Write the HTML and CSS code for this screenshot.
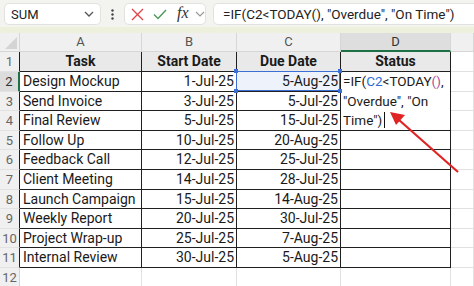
FILE: index.html
```html
<!DOCTYPE html>
<html lang="en">
<head>
  <meta charset="UTF-8">
  <title>Status Formula</title>
  <link rel="stylesheet" href="styles.css">
</head>
<body>

  <div class="toolbar">
    <div class="namebox">
      <span>SUM</span>
      <svg width="10" height="6" viewBox="0 0 10 6"><path d="M1 1 L5 5 L9 1" fill="none" stroke="#555" stroke-width="1.3"/></svg>
    </div>
    <div class="dots">
      <svg width="3" height="11" viewBox="0 0 3 11"><circle cx="1.5" cy="1.5" r="1.2" fill="#444"/><circle cx="1.5" cy="5.5" r="1.2" fill="#444"/><circle cx="1.5" cy="9.5" r="1.2" fill="#444"/></svg>
    </div>
    <div class="actions">
      <svg class="ic-x" width="13" height="13" viewBox="0 0 13 13"><path d="M1 1 L12 12 M12 1 L1 12" stroke="#e0474c" stroke-width="1.4" fill="none"/></svg>
      <svg class="ic-ok" width="14" height="11" viewBox="0 0 14 11"><path d="M1 5.5 L5 9.5 L13 1" stroke="#4a9a5a" stroke-width="1.4" fill="none"/></svg>
      <span class="fx">fx</span>
      <svg class="ic-dd" width="10" height="6" viewBox="0 0 10 6"><path d="M1 1 L5 5 L9 1" fill="none" stroke="#999" stroke-width="1.2"/></svg>
    </div>
    <div class="formula">=IF(C2&lt;TODAY(), "Overdue", "On Time")</div>
  </div>
  <div class="strip"></div>

  <div class="sheet">
    <!-- column headers -->
    <div class="corner"><svg width="12" height="12" viewBox="0 0 12 12"><path d="M12 0 L12 12 L0 12 Z" fill="#d4d4d4"/></svg></div>
    <div class="colhead">A</div>
    <div class="colhead">B</div>
    <div class="colhead">C</div>
    <div class="colhead active">D</div>
    <div class="colhead"></div>

    <div class="rowhead in">1</div>
    <div class="cell t head">Task</div>
    <div class="cell t head">Start Date</div>
    <div class="cell t head">Due Date</div>
    <div class="cell t head">Status</div>
    <div class="cell"></div>

    <div class="rowhead in active">2</div>
    <div class="cell t">Design Mockup</div>
    <div class="cell t num">1-Jul-25</div>
    <div class="cell t num ref">5-Aug-25
      <i class="h h1"></i><i class="h h2"></i><i class="h h3"></i><i class="h h4"></i>
    </div>
    <div class="cell t editor">
      <div>=IF(<span class="c-ref">C2</span>&lt;TODAY<span class="c-par">()</span>,</div>
      <div>"Overdue", "On</div>
      <div>Time")<span class="caret"></span></div>
    </div>
    <div class="cell"></div>

    <div class="rowhead in">3</div>
    <div class="cell t">Send Invoice</div>
    <div class="cell t num">3-Jul-25</div>
    <div class="cell t num">5-Jul-25</div>
    <div class="cell"></div>

    <div class="rowhead in">4</div>
    <div class="cell t">Final Review</div>
    <div class="cell t num">5-Jul-25</div>
    <div class="cell t num">15-Jul-25</div>
    <div class="cell"></div>

    <div class="rowhead in">5</div>
    <div class="cell t">Follow Up</div>
    <div class="cell t num">10-Jul-25</div>
    <div class="cell t num">20-Aug-25</div>
    <div class="cell t"></div>
    <div class="cell"></div>

    <div class="rowhead in">6</div>
    <div class="cell t">Feedback Call</div>
    <div class="cell t num">12-Jul-25</div>
    <div class="cell t num">25-Jul-25</div>
    <div class="cell t"></div>
    <div class="cell"></div>

    <div class="rowhead in">7</div>
    <div class="cell t">Client Meeting</div>
    <div class="cell t num">14-Jul-25</div>
    <div class="cell t num">28-Jul-25</div>
    <div class="cell t"></div>
    <div class="cell"></div>

    <div class="rowhead in">8</div>
    <div class="cell t">Launch Campaign</div>
    <div class="cell t num">15-Jul-25</div>
    <div class="cell t num">14-Aug-25</div>
    <div class="cell t"></div>
    <div class="cell"></div>

    <div class="rowhead in">9</div>
    <div class="cell t">Weekly Report</div>
    <div class="cell t num">20-Jul-25</div>
    <div class="cell t num">30-Jul-25</div>
    <div class="cell t"></div>
    <div class="cell"></div>

    <div class="rowhead in">10</div>
    <div class="cell t">Project Wrap-up</div>
    <div class="cell t num">25-Jul-25</div>
    <div class="cell t num">7-Aug-25</div>
    <div class="cell t"></div>
    <div class="cell"></div>

    <div class="rowhead in">11</div>
    <div class="cell t">Internal Review</div>
    <div class="cell t num">30-Jul-25</div>
    <div class="cell t num">5-Aug-25</div>
    <div class="cell t"></div>
    <div class="cell"></div>

    <div class="rowhead">12</div>
    <div class="cell"></div>
    <div class="cell"></div>
    <div class="cell"></div>
    <div class="cell"></div>
    <div class="cell"></div>
  </div>

  <!-- callout arrow pointing at the formula -->
  <svg class="arrow" width="474" height="286" viewBox="0 0 474 286">
    <line x1="458" y1="172" x2="399" y2="120" stroke="#e02424" stroke-width="2.2"/>
    <path d="M390 112 L405 115 L396 125 Z" fill="#e02424"/>
  </svg>

</body>
</html>
```

FILE: styles.css
```css
body {
  margin: 0;
  width: 474px;
  height: 286px;
  overflow: hidden;
  position: relative;
  background: #fff;
  font-family: Roboto, 'Liberation Sans', sans-serif;
  color: #1a1a1a;
}

.toolbar {
  display: flex;
  align-items: center;
  height: 27px;
  padding: 3px 0 2px 4px;
  box-sizing: border-box;
  background: #f3f3ef;
}

.namebox, .actions, .formula {
  height: 22px;
  background: #fff;
  border: 1px solid #e2e2de;
  border-radius: 5px;
  box-sizing: border-box;
  display: flex;
  align-items: center;
}

.namebox {
  width: 97px;
  padding: 0 6px 0 6px;
  justify-content: space-between;
  font-size: 13px;
  color: #222;
}

.dots {
  width: 23px;
  display: flex;
  justify-content: center;
}

.actions {
  width: 82px;
  padding: 0 0 0 6px;
}

.ic-x { margin-right: 9px; }
.ic-ok { margin-right: 10px; }
.ic-dd { margin-left: 6px; }

.fx {
  font-family: 'Liberation Serif', serif;
  font-style: italic;
  font-size: 16px;
  color: #333;
  margin-top: -2px;
}

.formula {
  flex: 1;
  margin-left: 7px;
  margin-right: -8px;
  padding-left: 9px;
  font-size: 13.5px;
  color: #222;
  white-space: nowrap;
  overflow: hidden;
}

.strip {
  height: 6px;
  background: #edf0dc;
}

.sheet {
  display: grid;
  grid-template-columns: 20px 122px 95px 104px 110px 23px;
  grid-template-rows: 19.4px repeat(12, 19.6px);
  font-size: 14px;
}

.corner {
  background: #f0f0f0;
  border-right: 1px solid #d6d6d6;
  border-bottom: 1px solid #d6d6d6;
  display: flex;
  align-items: flex-end;
  justify-content: flex-end;
  padding: 0 2px 2px 0;
  box-sizing: border-box;
}

.colhead {
  background: #f0f0f0;
  border-right: 1px solid #d6d6d6;
  border-bottom: 1px solid #d6d6d6;
  box-sizing: border-box;
  text-align: center;
  font-size: 13px;
  line-height: 18px;
  color: #555;
}

.colhead.active {
  background: #dedede;
  border-bottom: 2px solid #1e7145;
  color: #333;
}

.rowhead {
  background: #f0f0f0;
  border-right: 1px solid #d6d6d6;
  border-bottom: 1px solid #e2e2e2;
  box-sizing: border-box;
  text-align: center;
  font-size: 13px;
  line-height: 19px;
  color: #666;
}

.rowhead.in {
  border-right-color: #1f1f1f;
}

.rowhead.active {
  background: #dcdcdc;
  border-right: 2px solid #1e7145;
  color: #333;
}

.cell {
  border-right: 1px solid #e1e1e1;
  border-bottom: 1px solid #e1e1e1;
  box-sizing: border-box;
  padding: 0 3px;
  line-height: 19px;
  white-space: nowrap;
  overflow: hidden;
  position: relative;
}

.cell.t {
  border-right-color: #1f1f1f;
  border-bottom-color: #1f1f1f;
}

.cell.head {
  background: #e9e9e9;
  font-weight: bold;
  text-align: center;
}

.cell.num {
  text-align: right;
  padding-right: 2px;
}

.cell.ref {
  overflow: visible;
  background: #eef3fb;
}

.cell.ref::after {
  content: "";
  position: absolute;
  left: -1px;
  top: -1px;
  right: 0;
  bottom: 0;
  border: 1.5px solid #3b6fd4;
}

.h {
  position: absolute;
  width: 4px;
  height: 4px;
  background: #3b6fd4;
  z-index: 2;
}

.h1 { left: -3px; top: -3px; }
.h2 { right: -2px; top: -3px; }
.h3 { left: -3px; bottom: -2px; }
.h4 { right: -2px; bottom: -2px; }

.editor {
  grid-row: span 3;
  line-height: 19.6px;
  font-size: 13.5px;
  padding: 0 3px 0 2px;
  background: #fff;
}

.editor::before {
  content: "";
  position: absolute;
  left: -1px;
  top: -1px;
  right: -1px;
  height: 20px;
  border: 1.5px solid #1e7145;
  border-bottom: none;
}

.c-ref { color: #2f6ad8; }
.c-par { color: #b04a9a; }

.caret {
  display: inline-block;
  width: 1px;
  height: 16px;
  background: #111;
  margin-left: 2px;
  vertical-align: -3px;
}

.arrow {
  position: absolute;
  left: 0;
  top: 0;
  pointer-events: none;
}
```
